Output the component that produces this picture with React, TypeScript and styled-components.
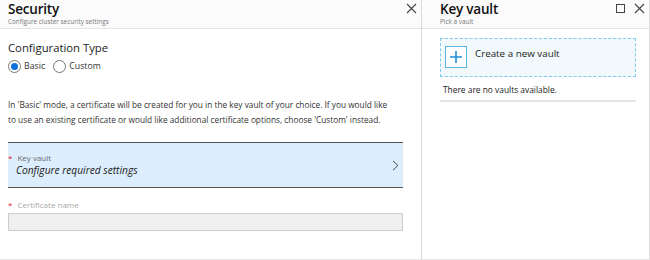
import React, { useState } from "react";
import styled, { createGlobalStyle } from "styled-components";

const GlobalStyle = createGlobalStyle`
  html, body {
    margin: 0;
    padding: 0;
    background: #ffffff;
  }
  body {
    font-family: "Open Sans", "Noto Sans", sans-serif;
    color: #000000;
  }
`;

const Screen = styled.div`
  display: flex;
  width: 650px;
  height: 260px;
  overflow: hidden;
  background: #ffffff;
`;

const Blade = styled.section<{ $width?: number }>`
  display: flex;
  flex-direction: column;
  ${(p) => (p.$width ? `width: ${p.$width}px; flex: none;` : "flex: 1;")}
  height: 259px;
  border-right: 1px solid #dcdcdc;
  border-bottom: 1px solid #e6e6e6;
  box-shadow: 1px 0 2px rgba(0, 0, 0, 0.08);
  background: #ffffff;
`;

const BladeHeader = styled.header<{ $indent: number }>`
  display: flex;
  align-items: flex-start;
  height: 29px;
  padding: 2px 4px 0 ${(p) => p.$indent}px;
  background: #fbfbfb;
  border-bottom: 1px solid #e3e3e3;
  box-sizing: border-box;
`;

const Titles = styled.div`
  flex: 1;
  display: flex;
  flex-direction: column;
`;

const Title = styled.h1`
  margin: 0;
  font-size: 13.5px;
  font-weight: 600;
  line-height: 15px;
  color: #111111;
  letter-spacing: -0.2px;
`;

const Subtitle = styled.div`
  font-size: 6.4px;
  line-height: 9px;
  color: #777777;
`;

const Controls = styled.div`
  display: flex;
  gap: 8px;
  padding-top: 1px;
`;

const IconButton = styled.button`
  width: 11px;
  height: 11px;
  padding: 0;
  border: 0;
  background: none;
  display: flex;
  align-items: center;
  justify-content: center;
  cursor: pointer;
`;

const Body = styled.div<{ $indent: number; $right: number }>`
  flex: 1;
  display: flex;
  flex-direction: column;
  padding: 0 ${(p) => p.$right}px 0 ${(p) => p.$indent}px;
`;

const SectionTitle = styled.div`
  margin-top: 11px;
  font-size: 11.3px;
  line-height: 16px;
  color: #222222;
`;

const RadioRow = styled.div`
  display: flex;
  align-items: center;
  gap: 8px;
  margin-top: 2px;
  height: 16px;
`;

const RadioLabel = styled.label`
  display: flex;
  align-items: center;
  gap: 3px;
  font-size: 8.8px;
  color: #333333;
  cursor: pointer;
`;

const RadioCircle = styled.span<{ $checked: boolean }>`
  width: 13px;
  height: 13px;
  box-sizing: border-box;
  border-radius: 50%;
  border: 1px solid #777777;
  background: #ffffff;
  display: flex;
  align-items: center;
  justify-content: center;
  &::after {
    content: "";
    width: 7px;
    height: 7px;
    border-radius: 50%;
    background: ${(p) => (p.$checked ? "#0f6fd9" : "transparent")};
  }
`;

const Description = styled.p`
  margin: 23px 0 0;
  padding-right: 10px;
  font-size: 8.3px;
  line-height: 15px;
  color: #333333;
`;

const PickerField = styled.button`
  margin-top: 15px;
  height: 46px;
  box-sizing: border-box;
  border: 0;
  border-top: 1px solid #555555;
  border-bottom: 1px solid #555555;
  background: #dcedfc;
  display: flex;
  align-items: center;
  padding: 0 4px 0 0;
  text-align: left;
  font-family: inherit;
  cursor: pointer;
`;

const PickerText = styled.div`
  flex: 1;
  display: flex;
  flex-direction: column;
`;

const FieldLabel = styled.div<{ $muted?: boolean }>`
  font-size: 8px;
  line-height: 11px;
  color: ${(p) => (p.$muted ? "#a8a8a8" : "#6a6a6a")};
  &::before {
    content: "*";
    color: #e0202a;
    margin-right: 5px;
  }
`;

const PickerValue = styled.div`
  font-size: 10.2px;
  line-height: 15px;
  font-style: italic;
  color: #222222;
  padding-left: 8px;
`;

const FieldBlock = styled.div`
  margin-top: 11px;
  display: flex;
  flex-direction: column;
  gap: 3px;
`;

const TextInput = styled.input`
  height: 18px;
  box-sizing: border-box;
  border: 1px solid #cccccc;
  background: #f0f0f0;
  font-family: inherit;
`;

const CreateTile = styled.button`
  margin-top: 9px;
  height: 39px;
  box-sizing: border-box;
  border: 1px dashed #7fcbf0;
  background: #f1f9fd;
  display: flex;
  align-items: flex-start;
  gap: 8px;
  padding: 7px 4px 0 4px;
  font-family: inherit;
  cursor: pointer;
  text-align: left;
`;

const PlusBox = styled.span`
  width: 22px;
  height: 22px;
  box-sizing: border-box;
  border: 1px solid #59b4e0;
  background: #ffffff;
  display: flex;
  align-items: center;
  justify-content: center;
`;

const TileLabel = styled.span`
  font-size: 9.8px;
  line-height: 14px;
  color: #222222;
  padding-top: 1px;
`;

const EmptyNote = styled.div`
  padding: 7px 3px 0;
  height: 16px;
  font-size: 8.4px;
  line-height: 12px;
  color: #222222;
  border-bottom: 2px solid #e6e6e6;
`;

function CloseIcon() {
  return (
    <svg width="11" height="11" viewBox="0 0 11 11">
      <path d="M1 1L10 10M10 1L1 10" stroke="#444" strokeWidth="1.1" />
    </svg>
  );
}

function MaximizeIcon() {
  return (
    <svg width="11" height="11" viewBox="0 0 11 11">
      <rect x="1.5" y="1.5" width="8" height="8" fill="none" stroke="#444" strokeWidth="1" />
    </svg>
  );
}

function Chevron() {
  return (
    <svg width="7" height="11" viewBox="0 0 7 11">
      <path d="M1 0.8L5.8 5.5L1 10.2" fill="none" stroke="#444" strokeWidth="1" />
    </svg>
  );
}

function Plus() {
  return (
    <svg width="14" height="14" viewBox="0 0 14 14">
      <path d="M7 1V13M1 7H13" stroke="#1e90d6" strokeWidth="1.6" />
    </svg>
  );
}

export default function App() {
  const [mode, setMode] = useState<"basic" | "custom">("basic");

  return (
    <Screen>
      <GlobalStyle />
      <Blade $width={421}>
        <BladeHeader $indent={8}>
          <Titles>
            <Title>Security</Title>
            <Subtitle>Configure cluster security settings</Subtitle>
          </Titles>
          <Controls>
            <IconButton aria-label="Close">
              <CloseIcon />
            </IconButton>
          </Controls>
        </BladeHeader>
        <Body $indent={8} $right={18}>
          <SectionTitle>Configuration Type</SectionTitle>
          <RadioRow>
            <RadioLabel onClick={() => setMode("basic")}>
              <RadioCircle $checked={mode === "basic"} />
              Basic
            </RadioLabel>
            <RadioLabel onClick={() => setMode("custom")}>
              <RadioCircle $checked={mode === "custom"} />
              Custom
            </RadioLabel>
          </RadioRow>
          <Description>
            In 'Basic' mode, a certificate will be created for you in the key vault of your
            choice. If you would like to use an existing certificate or would like additional
            certificate options, choose 'Custom' instead.
          </Description>
          <PickerField>
            <PickerText>
              <FieldLabel>Key vault</FieldLabel>
              <PickerValue>Configure required settings</PickerValue>
            </PickerText>
            <Chevron />
          </PickerField>
          <FieldBlock>
            <FieldLabel $muted>Certificate name</FieldLabel>
            <TextInput disabled />
          </FieldBlock>
        </Body>
      </Blade>
      <Blade>
        <BladeHeader $indent={18}>
          <Titles>
            <Title>Key vault</Title>
            <Subtitle>Pick a vault</Subtitle>
          </Titles>
          <Controls>
            <IconButton aria-label="Maximize">
              <MaximizeIcon />
            </IconButton>
            <IconButton aria-label="Close">
              <CloseIcon />
            </IconButton>
          </Controls>
        </BladeHeader>
        <Body $indent={18} $right={13}>
          <CreateTile>
            <PlusBox>
              <Plus />
            </PlusBox>
            <TileLabel>Create a new vault</TileLabel>
          </CreateTile>
          <EmptyNote>There are no vaults available.</EmptyNote>
        </Body>
      </Blade>
    </Screen>
  );
}
